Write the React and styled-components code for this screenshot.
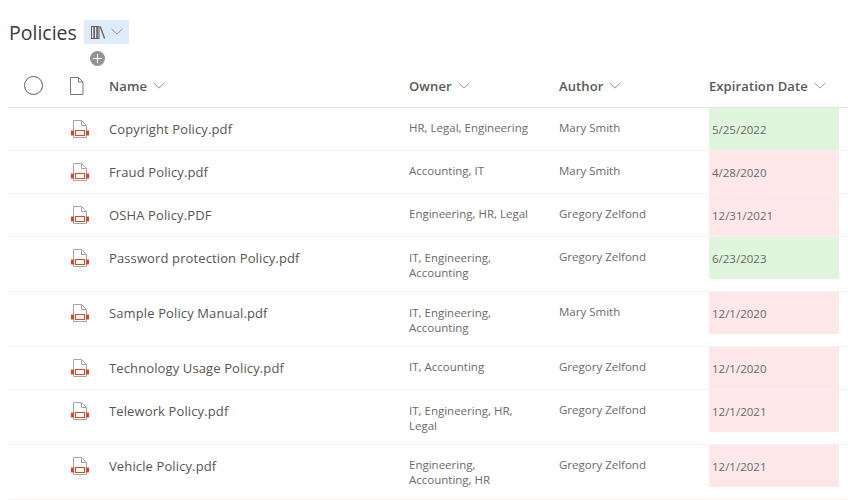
import React from "react";
import styled, { createGlobalStyle } from "styled-components";

const Global = createGlobalStyle`
  html, body { margin: 0; padding: 0; background: #fff; }
  body { font-family: "Open Sans", "Noto Sans", sans-serif; color: #323130; overflow: hidden; }
`;

const Page = styled.div`
  width: 848px;
  height: 500px;
  overflow: hidden;
  padding-left: 8px;
  box-sizing: border-box;
  display: flex;
  flex-direction: column;
`;

const TitleBar = styled.div`
  display: flex;
  align-items: flex-start;
  height: 43px;
  padding: 20px 0 0 1px;
  box-sizing: content-box;
`;

const Title = styled.h1`
  margin: 0;
  font-size: 19.5px;
  line-height: 25px;
  font-weight: 400;
  color: #3b3a39;
`;

const ViewButton = styled.div`
  display: flex;
  align-items: center;
  gap: 5px;
  width: 45px;
  height: 24px;
  margin-left: 7px;
  padding-left: 6px;
  box-sizing: border-box;
  background: #deecf9;
`;

const AddBadge = styled.span`
  position: absolute;
  left: 90px;
  top: 51px;
  width: 15px;
  height: 15px;
  border-radius: 50%;
  background: #969492;
  display: flex;
  align-items: center;
  justify-content: center;
`;

const Row = styled.div`
  display: grid;
  grid-template-columns: 51px 50px 300px 150px 150px 130px 1fr;
  height: ${(p) => p.$h}px;
  box-sizing: border-box;
  border-bottom: 1px solid ${(p) => (p.$header ? "#e6e5e3" : "#f3f2f1")};
`;

const HeadCell = styled.div`
  display: flex;
  align-items: center;
  gap: 6px;
  font-size: 13px;
  font-weight: 600;
  color: #5a5856;
  padding-top: 1px;
  letter-spacing: 0.1px;
`;

const HeadIcon = styled.div`
  display: flex;
  align-items: center;
  padding-left: ${(p) => p.$pad}px;
  padding-top: 1px;
`;

const RowIcon = styled.div`
  padding: 12px 0 0 12px;
`;

const NameCell = styled.div`
  font-size: 13px;
  line-height: 18px;
  padding-top: 12px;
  color: #575553;
  letter-spacing: 0.12px;
`;

const SmallCell = styled.div`
  font-size: 11.5px;
  line-height: 15px;
  padding-top: ${(p) => (p.$wrapped ? 13 : 12)}px;
  color: #6b6967;
  max-width: ${(p) => p.$max || 140}px;
`;

const DateCell = styled.div`
  height: 42px;
  box-sizing: border-box;
  background: ${(p) => (p.$ok ? "#dff6dd" : "#fde7e9")};
  padding: 14px 0 0 3px;
  font-size: 11.5px;
  line-height: 15px;
  color: #6b6967;
`;

const Chevron = ({ size = 12, color = "#8a8886" }) => (
  <svg width={size} height={size * 0.6} viewBox="0 0 12 7" fill="none">
    <path d="M0.5 0.7 L6 6 L11.5 0.7" stroke={color} strokeWidth="0.9" />
  </svg>
);

const LibraryIcon = () => (
  <svg width="16" height="15" viewBox="0 0 16 15" fill="none" stroke="#605e5c" strokeWidth="1">
    <rect x="1.5" y="1.5" width="2.4" height="12" />
    <rect x="4.4" y="1.5" width="2.4" height="12" />
    <rect x="7.6" y="1.5" width="1.4" height="12" />
    <path d="M10.2 1.5 L14.6 13.5" strokeWidth="1.3" />
  </svg>
);

const FileIcon = () => (
  <svg width="15" height="18" viewBox="0 0 15 18" fill="none" stroke="#797775" strokeWidth="1">
    <path d="M1.5 0.5 H9.5 L14 5 V17.5 H1.5 Z M9.5 0.5 V5 H14" />
  </svg>
);

const PdfIcon = () => (
  <svg width="18" height="18" viewBox="0 0 18 18" fill="none">
    <path d="M2.5 0.5 H10.5 L15.5 5.5 V17.5 H2.5 Z M10.5 0.5 V5.5 H15.5" stroke="#a8a6a4" strokeWidth="1" />
    <rect x="4.5" y="10.5" width="9" height="5" fill="#fff" stroke="#d8492a" strokeWidth="1" />
    <rect x="0" y="10.5" width="3" height="5" fill="#d8492a" />
    <rect x="15" y="10.5" width="3" height="5" fill="#d8492a" />
  </svg>
);

const Circle = styled.span`
  display: block;
  width: 17px;
  height: 17px;
  border: 1px solid #605e5c;
  border-radius: 50%;
`;

const rows = [
  { h: 43, name: "Copyright Policy.pdf", owner: "HR, Legal, Engineering", author: "Mary Smith", date: "5/25/2022", ok: true },
  { h: 43, name: "Fraud Policy.pdf", owner: "Accounting, IT", author: "Mary Smith", date: "4/28/2020" },
  { h: 43, name: "OSHA Policy.PDF", owner: "Engineering, HR, Legal", author: "Gregory Zelfond", date: "12/31/2021" },
  { h: 55, name: "Password protection Policy.pdf", owner: "IT, Engineering, Accounting", wrapped: true, author: "Gregory Zelfond", date: "6/23/2023", ok: true },
  { h: 55, name: "Sample Policy Manual.pdf", owner: "IT, Engineering, Accounting", wrapped: true, author: "Mary Smith", date: "12/1/2020" },
  { h: 43, name: "Technology Usage Policy.pdf", owner: "IT, Accounting", author: "Gregory Zelfond", date: "12/1/2020" },
  { h: 55, name: "Telework Policy.pdf", owner: "IT, Engineering, HR, Legal", wrapped: true, author: "Gregory Zelfond", date: "12/1/2021" },
  { h: 55, name: "Vehicle Policy.pdf", owner: "Engineering, Accounting, HR", author: "Gregory Zelfond", date: "12/1/2021" },
];

export default function App() {
  return (
    <Page>
      <Global />
      <TitleBar>
        <Title>Policies</Title>
        <ViewButton>
          <LibraryIcon />
          <Chevron />
        </ViewButton>
      </TitleBar>
      <AddBadge>
        <svg width="9" height="9" viewBox="0 0 9 9" stroke="#fff" strokeWidth="1">
          <path d="M4.5 0 V9 M0 4.5 H9" />
        </svg>
      </AddBadge>
      <Row $header $h={45}>
        <HeadIcon $pad={16}><Circle /></HeadIcon>
        <HeadIcon $pad={10}><FileIcon /></HeadIcon>
        <HeadCell>Name <Chevron /></HeadCell>
        <HeadCell>Owner <Chevron /></HeadCell>
        <HeadCell>Author <Chevron /></HeadCell>
        <HeadCell>Expiration Date <Chevron /></HeadCell>
      </Row>
      {rows.map((r) => (
        <Row key={r.name} $h={r.h}>
          <div />
          <RowIcon><PdfIcon /></RowIcon>
          <NameCell>{r.name}</NameCell>
          <SmallCell $max={125} $wrapped={r.wrapped}>{r.owner}</SmallCell>
          <SmallCell>{r.author}</SmallCell>
          <DateCell $ok={r.ok}>{r.date}</DateCell>
        </Row>
      ))}
    </Page>
  );
}
